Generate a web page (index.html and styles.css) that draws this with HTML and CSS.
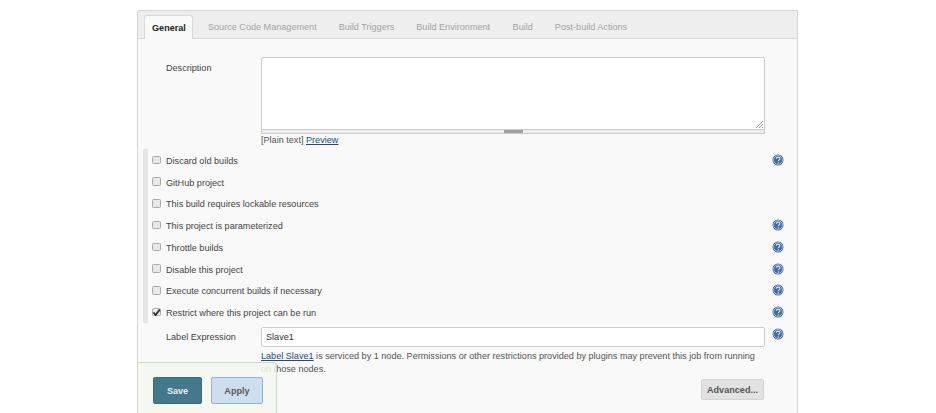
FILE: index.html
```html
<!DOCTYPE html>
<html lang="en">
<head>
<meta charset="utf-8">
<title>Job configuration</title>
<link rel="stylesheet" href="styles.css">
</head>
<body>
<svg class="defs" width="0" height="0" aria-hidden="true">
  <symbol id="help" viewBox="0 0 12 12">
    <circle cx="6" cy="6" r="5.5" fill="#3f6aa8"/>
    <circle cx="6" cy="6" r="4.4" fill="none" stroke="#a9c0de" stroke-width=".9"/>
    <path d="M4.3 4.7C4.4 3.6 5.2 3.1 6.1 3.1c1 0 1.8.6 1.8 1.5 0 1.3-1.5 1.3-1.5 2.6" fill="none" stroke="#dfe9f5" stroke-width="1.1"/>
    <circle cx="6.3" cy="8.9" r=".7" fill="#dfe9f5"/>
  </symbol>
</svg>
<main class="panel">
  <nav class="tabs">
    <a class="tab active">General</a>
    <a class="tab">Source Code Management</a>
    <a class="tab">Build Triggers</a>
    <a class="tab">Build Environment</a>
    <a class="tab">Build</a>
    <a class="tab">Post-build Actions</a>
  </nav>
  <section class="content">
    <div class="field desc">
      <label class="label">Description</label>
      <div class="control">
        <div class="textarea">
          <svg class="grip" width="10" height="10" viewBox="0 0 10 10"><path d="M9 2 2 9M9 5 5 9M9 8 8 9" stroke="#999" fill="none"/></svg>
        </div>
        <div class="resizer"><span class="handle"></span></div>
        <div class="format">[Plain text] <a class="link">Preview</a></div>
      </div>
    </div>
    <div class="options">
      <div class="option"><span class="check"></span><span class="opt-text">Discard old builds</span><svg class="help"><use href="#help"/></svg></div>
      <div class="option"><span class="check"></span><span class="opt-text">GitHub project</span></div>
      <div class="option"><span class="check"></span><span class="opt-text">This build requires lockable resources</span></div>
      <div class="option"><span class="check"></span><span class="opt-text">This project is parameterized</span><svg class="help"><use href="#help"/></svg></div>
      <div class="option"><span class="check"></span><span class="opt-text">Throttle builds</span><svg class="help"><use href="#help"/></svg></div>
      <div class="option"><span class="check"></span><span class="opt-text">Disable this project</span><svg class="help"><use href="#help"/></svg></div>
      <div class="option"><span class="check"></span><span class="opt-text">Execute concurrent builds if necessary</span><svg class="help"><use href="#help"/></svg></div>
      <div class="option"><span class="check checked"><svg width="9" height="9" viewBox="0 0 9 9"><path d="M1.5 4.5 3.6 7 7.8 1.6" fill="none" stroke="#222" stroke-width="1.7"/></svg></span><span class="opt-text">Restrict where this project can be run</span><svg class="help"><use href="#help"/></svg></div>
    </div>
    <div class="field expr">
      <label class="label">Label Expression</label>
      <div class="control">
        <div class="input">Slave1</div>
        <p class="note"><a class="link">Label Slave1</a> is serviced by 1 node. Permissions or other restrictions provided by plugins may prevent this job from running on those nodes.</p>
      </div>
      <svg class="help"><use href="#help"/></svg>
    </div>
    <div class="advanced-row"><button class="btn advanced">Advanced...</button></div>
  </section>
  <div class="savebar">
    <button class="btn save">Save</button>
    <button class="btn apply">Apply</button>
  </div>
</main>
</body>
</html>
```
FILE: styles.css
```css
html, body { margin: 0; padding: 0; background: #fff; height: 413px; overflow: hidden; }
body { font-family: "Liberation Sans", Arial, sans-serif; font-size: 9.1px; color: #333; }
.defs { position: absolute; }
.panel { position: relative; box-sizing: border-box; width: 661px; height: 403px; margin: 10px 0 0 137px; border: 1px solid #d6d6d6; border-bottom: 0; border-radius: 2px 2px 0 0; background: #f9f9f9; overflow: hidden; }
.tabs { display: flex; height: 28px; box-sizing: border-box; padding: 4px 0 0 6px; background: #eee; border-bottom: 1px solid #d9d9d9; }
.tab { display: block; height: 24px; line-height: 25px; padding: 0 7px; margin-right: 8px; color: #a3a3a3; }
.tab.active { box-sizing: border-box; width: 49px; height: 24px; line-height: 24px; padding: 0 0 0 7px; background: #f9f9f9; border: 1px solid #d9d9d9; border-bottom: 0; border-radius: 3px 3px 0 0; color: #222; font-weight: 700; margin-right: 8px; }
.tab:nth-child(5) { margin-left: .5px; }
.content { padding-top: 18px; }
.field { display: flex; }
.label { width: 95px; margin-left: 28px; flex: none; line-height: 20px; color: #444; }
.desc .label { padding-top: 1px; }
.control { width: 504px; flex: none; }
.textarea { position: relative; box-sizing: border-box; height: 73px; background: #fff; border: 1px solid #ccc; border-radius: 2px 2px 0 0; }
.grip { position: absolute; right: 0; bottom: 0; }
.resizer { height: 3px; background: #eee; border: 1px solid #ccc; border-top: 0; display: flex; justify-content: center; }
.handle { width: 19px; height: 3px; background: #a0a0a0; }
.format { line-height: 13px; color: #555; }
.link { color: #204a87; text-decoration: underline; }
.options { margin: 2px 0 0 5px; border-left: 5px solid #e6e6e6; width: 640px; }
.option { display: flex; align-items: center; height: 21.75px; position: relative; }
.check { box-sizing: border-box; width: 8.5px; height: 8.5px; margin: 0 0 0 4px; background: #e8e8e8; border: 1px solid #aaa; border-radius: 1.5px; display: flex; align-items: center; justify-content: center; flex: none; }
.check svg { flex: none; }
.opt-text { margin: 2px 0 0 5.5px; color: #444; }
.help { width: 12px; height: 12px; flex: none; }
.option .help { margin-left: auto; margin-right: 4px; }
.expr { margin-top: 4px; }
.expr .help { margin: 1px 0 0 7px; }
.input { box-sizing: border-box; height: 20px; line-height: 18px; padding-left: 4px; background: #fff; border: 1px solid #ccc; border-radius: 2px; color: #333; }
.note { margin: 3px 0 0; line-height: 12.5px; color: #555; }
.btn { font: 700 9.1px "Liberation Sans", Arial, sans-serif; box-sizing: border-box; border-radius: 2px; padding: 0; }
.advanced-row { display: flex; justify-content: flex-end; padding: 4px 33px 0 0; }
.advanced { width: 63px; height: 21px; background: #e2e2e2; border: 1px solid #d4d4d4; color: #555; }
.savebar { position: absolute; left: -1px; bottom: 0; box-sizing: border-box; width: 140px; height: 51px; display: flex; gap: 9px; padding: 14px 0 0 15px; background: rgba(244, 248, 238, .85); border: 1px solid #c9dcc4; border-bottom: 0; border-radius: 0 4px 0 0; }
.save { width: 49px; height: 27px; background: #44788d; border: 1px solid #3b6b80; color: #eaf1f4; }
.apply { width: 52px; height: 27px; background: #cddeef; border: 1px solid #90b4d8; color: #5b5b5b; }
```
